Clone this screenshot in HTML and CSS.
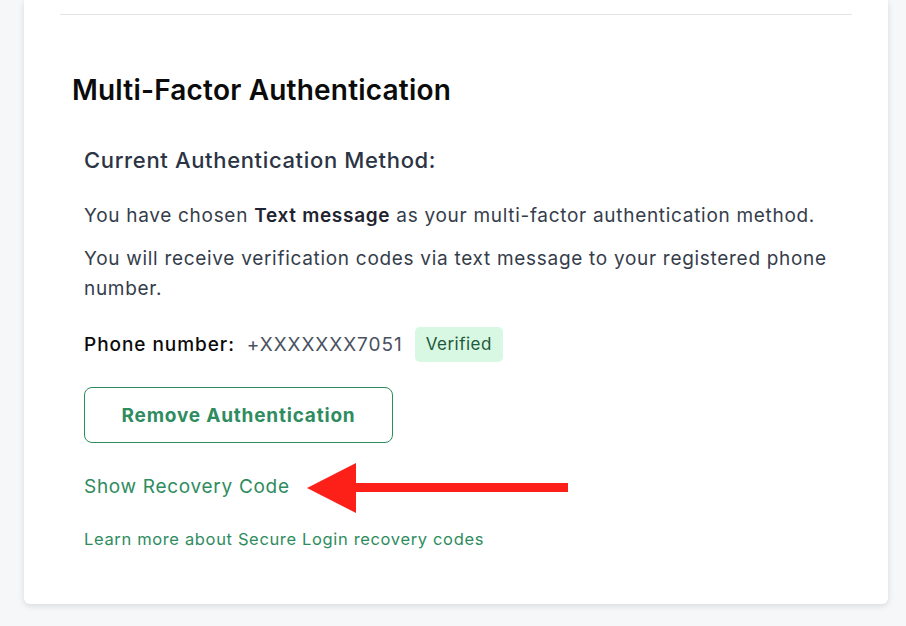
FILE: index.html
```html
<!DOCTYPE html>
<html lang="en">
<head>
    <meta charset="UTF-8">
    <meta name="viewport" content="width=device-width, initial-scale=1.0">
    <title>Multi-Factor Authentication</title>
    <link rel="stylesheet" href="styles.css">
</head>
<body>
    <div class="card">
        <hr class="divider">

        <section class="mfa">
            <h2>Multi-Factor Authentication</h2>

            <div class="mfa-body">
                <h3>Current Authentication Method:</h3>
                <p class="first">You have chosen <strong>Text message</strong> as your multi-factor authentication method.</p>
                <p>You will receive verification codes via text message to your registered phone number.</p>

                <div class="phone-row">
                    <span class="phone-label">Phone number:</span>
                    <span class="phone-value">+XXXXXXX7051</span>
                    <span class="badge">Verified</span>
                </div>

                <button class="remove-btn">Remove Authentication</button>

                <div class="recovery-row">
                    <a href="#" class="recovery-link">Show Recovery Code</a>
                    <!-- annotation arrow -->
                    <svg class="arrow" width="262" height="52" viewBox="0 0 262 52">
                        <polygon points="0,26 49,1 49,21 261,21 261,30 49,30 49,51" fill="#fd2019"/>
                    </svg>
                </div>

                <a href="#" class="learn-link">Learn more about Secure Login recovery codes</a>
            </div>
        </section>
    </div>
</body>
</html>
```

FILE: styles.css
```css
body {
    margin: 0;
    padding: 0 18px 22px 24px;
    background-color: #f6f7f9;
    font-family: Inter, "Noto Sans", sans-serif;
}
.card {
    background: #fff;
    border-radius: 0 0 6px 6px;
    box-shadow: 0 2px 6px rgba(0, 0, 0, 0.12);
    padding: 14px 36px 53px 36px;
}
.divider {
    margin: 0;
    border: none;
    border-top: 1px solid #e3e3e8;
}
.mfa {
    padding-left: 12px;
}
.mfa h2 {
    margin: 57px 0 0;
    font-size: 28px;
    line-height: 36px;
    font-weight: 600;
    color: #0b0b0b;
    letter-spacing: 0.2px;
}
.mfa-body {
    padding-left: 12px;
    max-width: 744px;
}
.mfa-body h3 {
    margin: 38px 0 0;
    font-size: 22px;
    line-height: 28px;
    font-weight: 500;
    color: #2b3444;
    letter-spacing: 0.65px;
}
.mfa-body p {
    margin: 13px 0 0;
    font-size: 19px;
    line-height: 30px;
    color: #353d4b;
    letter-spacing: 0.7px;
}
.mfa-body p.first {
    margin-top: 27px;
}
.mfa-body strong {
    font-weight: 600;
    color: #1f2430;
}
.phone-row {
    display: flex;
    align-items: center;
    margin-top: 23px;
    height: 35px;
    font-size: 19px;
    letter-spacing: 0.95px;
}
.phone-label {
    color: #0b0b0b;
    font-weight: 500;
}
.phone-value {
    margin-left: 12px;
    color: #4a5261;
}
.badge {
    margin-left: 12px;
    padding: 0 11px;
    height: 35px;
    line-height: 35px;
    background-color: #d8f8e4;
    color: #1d5a3a;
    border-radius: 5px;
    font-size: 17px;
    letter-spacing: 0.5px;
}
.remove-btn {
    display: block;
    margin-top: 25px;
    width: 309px;
    height: 56px;
    background: #fff;
    border: 1px solid #2e8c5e;
    border-radius: 8px;
    color: #2e8c5e;
    font-family: inherit;
    font-size: 19px;
    font-weight: 700;
    letter-spacing: 0.8px;
    cursor: pointer;
}
.recovery-row {
    position: relative;
    margin-top: 30px;
    line-height: 28px;
}
.recovery-link {
    font-size: 19px;
    letter-spacing: 0.7px;
    color: #2e8c5e;
    text-decoration: none;
}
.arrow {
    position: absolute;
    left: 223px;
    top: -11px;
}
.learn-link {
    display: block;
    margin-top: 26px;
    font-size: 16.5px;
    line-height: 24px;
    letter-spacing: 0.65px;
    color: #2e8c5e;
    text-decoration: none;
}
```
